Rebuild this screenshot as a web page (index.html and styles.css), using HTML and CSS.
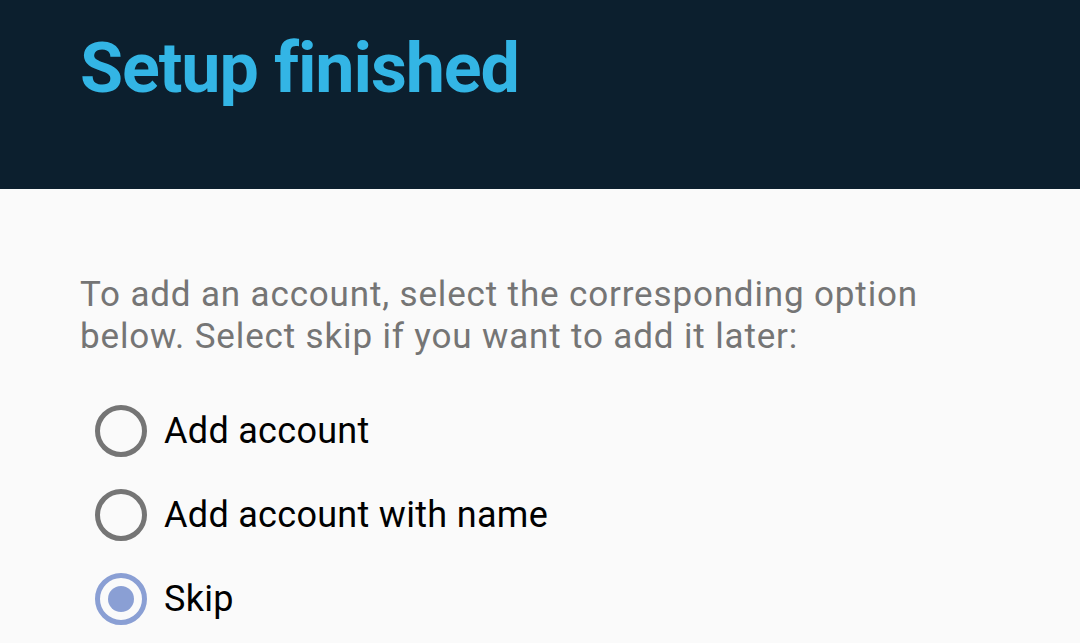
FILE: index.html
```html
<!DOCTYPE html>
<html>
<head>
<meta charset="utf-8">
<link rel="stylesheet" href="styles.css">
</head>
<body>
<header class="header">
  <h1 class="title">Setup finished</h1>
</header>
<main class="content">
  <p class="desc">To add an account, select the corresponding option below. Select skip if you want to add it later:</p>
  <div class="options">
    <label class="option"><span class="radio"></span><span class="label">Add account</span></label>
    <label class="option"><span class="radio"></span><span class="label">Add account with name</span></label>
    <label class="option"><span class="radio checked"></span><span class="label">Skip</span></label>
  </div>
</main>
</body>
</html>
```
FILE: styles.css
```css
html, body {
  margin: 0;
  padding: 0;
  background: #fafafa;
  font-family: Roboto, "Liberation Sans", sans-serif;
  overflow: hidden;
}
.header {
  height: 189px;
  background: #0c1f2e;
  box-sizing: border-box;
  padding: 28px 0 0 80px;
}
.title {
  margin: 0;
  font-size: 70px;
  font-weight: 700;
  color: #33b5e5;
  line-height: 80px;
  letter-spacing: -1.1px;
}
.content {
  padding: 85px 80px 0 80px;
}
.desc {
  margin: 0;
  font-size: 35px;
  line-height: 42px;
  letter-spacing: 0.85px;
  color: #757575;
  max-width: 880px;
}
.options {
  display: flex;
  flex-direction: column;
  margin-top: 31px;
  padding-left: 15px;
}
.option {
  display: flex;
  align-items: center;
  height: 84px;
}
.radio {
  width: 42px;
  height: 42px;
  border: 5px solid #757575;
  border-radius: 50%;
  box-sizing: content-box;
  display: flex;
  align-items: center;
  justify-content: center;
  flex: none;
}
.radio.checked {
  border-color: #8a9fd4;
}
.radio.checked::after {
  content: "";
  width: 26px;
  height: 26px;
  border-radius: 50%;
  background: #8a9fd4;
}
.label {
  margin-left: 17px;
  font-size: 36px;
  letter-spacing: 0.3px;
  color: #000;
}
```
